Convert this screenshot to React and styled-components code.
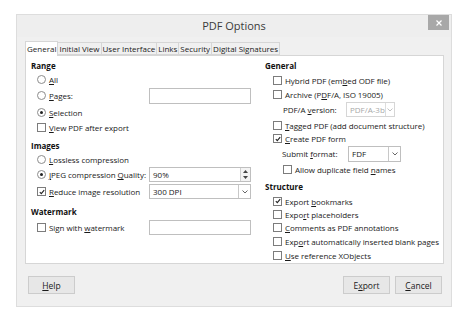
import React from 'react';
import styled, { createGlobalStyle } from 'styled-components';

const Global = createGlobalStyle`
  html, body { margin: 0; padding: 0; background: #ffffff; }
  body { font-family: "Open Sans", "Noto Sans", sans-serif; font-size: 8px; color: #1a1a1a; }
  #root { width: 474px; height: 325px; }
`;

const Page = styled.div`
  padding: 14px 0 0 16px;
`;

const Dialog = styled.div`
  width: 436px;
  height: 293px;
  box-sizing: border-box;
  background: #f0f0f0;
  border: 1px solid #dddddd;
  display: flex;
  flex-direction: column;
`;

const TitleBar = styled.div`
  height: 22px;
  display: grid;
  grid-template-columns: 1fr auto 1fr;
  align-items: start;
  background: #eeeeee;
`;

const Title = styled.div`
  grid-column: 2;
  font-size: 11px;
  line-height: 22px;
  color: #3a3a3a;
`;

const Close = styled.div`
  grid-column: 3;
  justify-self: end;
  margin-right: 2px;
  width: 21px;
  height: 15px;
  background: #a8a8a8;
  display: flex;
  align-items: center;
  justify-content: center;
`;

const Body = styled.div`
  padding: 4px 7px 0 8px;
  display: flex;
  flex-direction: column;
`;

const TabBar = styled.div`
  display: flex;
  align-items: flex-end;
  height: 14px;
  position: relative;
  z-index: 1;
`;

const Tab = styled.div`
  box-sizing: border-box;
  padding: 0 1px;
  height: ${p => (p.$active ? 15 : 13)}px;
  line-height: ${p => (p.$active ? 13 : 12)}px;
  margin-bottom: ${p => (p.$active ? -1 : 0)}px;
  border: 1px solid #d6d6d6;
  border-bottom: ${p => (p.$active ? 'none' : '1px solid #d6d6d6')};
  margin-right: -1px;
  background: ${p => (p.$active ? '#ffffff' : '#f0f0f0')};
  color: #1a1a1a;
  white-space: nowrap;
`;

const Panel = styled.div`
  height: 209px;
  box-sizing: border-box;
  border: 1px solid #d6d6d6;
  background: #ffffff;
  display: grid;
  grid-template-columns: 239px 1fr;
`;

const Column = styled.div`
  display: flex;
  flex-direction: column;
  padding-top: 3px;
  padding-right: ${p => p.$pr || 0}px;
`;

const Header = styled.div`
  font-weight: 700;
  height: 14px;
  line-height: 14px;
  padding-left: ${p => p.$indent || 0}px;
  margin-top: ${p => p.$mt || 0}px;
  color: #111;
`;

const Row = styled.div`
  display: flex;
  align-items: center;
  height: ${p => p.$h}px;
  padding-left: ${p => p.$indent}px;
  white-space: nowrap;
`;

const Label = styled.span`
  margin-left: ${p => (p.$noInd ? 0 : 3)}px;
  width: ${p => (p.$w ? `${p.$w}px` : 'auto')};
  flex: none;
  color: ${p => (p.$muted ? '#9a9a9a' : '#1a1a1a')};
  letter-spacing: -0.05px;
`;

const SideLabel = styled.span`
  margin-left: auto;
  margin-right: 3px;
`;

const RadioBox = styled.span`
  width: 7px;
  height: 7px;
  border: 1px solid #8c8c8c;
  border-radius: 50%;
  background: #fff;
  display: flex;
  align-items: center;
  justify-content: center;
  flex: none;
`;

const Dot = styled.span`
  width: 3px;
  height: 3px;
  border-radius: 50%;
  background: #222;
`;

const CheckBox = styled.span`
  width: 7px;
  height: 7px;
  border: 1px solid #7c7c7c;
  background: #fff;
  display: flex;
  align-items: center;
  justify-content: center;
  flex: none;
`;

const Field = styled.div`
  box-sizing: border-box;
  width: ${p => p.$w}px;
  height: ${p => p.$h}px;
  margin-left: ${p => (p.$auto ? 'auto' : '0')};
  border: 1px solid ${p => (p.$disabled ? '#d6d6d6' : '#bfbfbf')};
  background: #fff;
  display: flex;
  align-items: stretch;
  color: ${p => (p.$disabled ? '#a8a8a8' : '#1a1a1a')};
`;

const FieldText = styled.span`
  flex: 1;
  padding-left: 3px;
  display: flex;
  align-items: center;
`;

const ArrowBox = styled.span`
  width: 11px;
  border-left: 1px solid ${p => (p.$disabled ? '#dddddd' : '#c8c8c8')};
  display: flex;
  align-items: center;
  justify-content: center;
`;

const SpinBox = styled.span`
  width: 9px;
  border-left: 1px solid #d0d0d0;
  display: flex;
  flex-direction: column;
  align-items: center;
  justify-content: space-evenly;
  background: #f4f4f4;
`;

const ButtonRow = styled.div`
  display: flex;
  align-items: center;
  padding: 12px 9px 0 11px;
  gap: 5px;
`;

const Spacer = styled.div`
  flex: 1;
`;

const Button = styled.div`
  box-sizing: border-box;
  width: 47px;
  height: 18px;
  border: 1px solid #cccccc;
  background: #e7e7e7;
  display: flex;
  align-items: center;
  justify-content: center;
  font-size: 8.5px;
  color: #1a1a1a;
`;

const Radio = ({ checked }) => (
  <RadioBox>{checked && <Dot />}</RadioBox>
);

const Check = ({ checked }) => (
  <CheckBox>
    {checked && (
      <svg width="6" height="6" viewBox="0 0 6 6">
        <path d="M0.8 3.2 L2.3 4.7 L5.2 1.2" fill="none" stroke="#222" strokeWidth="1.1" />
      </svg>
    )}
  </CheckBox>
);

const Chevron = ({ color = '#555' }) => (
  <svg width="6" height="4" viewBox="0 0 6 4">
    <path d="M0.5 0.5 L3 3 L5.5 0.5" fill="none" stroke={color} strokeWidth="0.9" />
  </svg>
);

const Select = ({ w, h, value, disabled, auto }) => (
  <Field $w={w} $h={h} $disabled={disabled} $auto={auto}>
    <FieldText>{value}</FieldText>
    <ArrowBox $disabled={disabled}>
      <Chevron color={disabled ? '#bbb' : '#555'} />
    </ArrowBox>
  </Field>
);

export default function App() {
  return (
    <>
      <Global />
      <Page>
        <Dialog>
          <TitleBar>
            <Title>PDF Options</Title>
            <Close>
              <svg width="6" height="6" viewBox="0 0 6 6">
                <path d="M0.5 0.5 L5.5 5.5 M5.5 0.5 L0.5 5.5" stroke="#fff" strokeWidth="1.2" />
              </svg>
            </Close>
          </TitleBar>
          <Body>
            <TabBar>
              <Tab $active>General</Tab>
              <Tab>Initial View</Tab>
              <Tab>User Interface</Tab>
              <Tab>Links</Tab>
              <Tab>Security</Tab>
              <Tab>Digital Signatures</Tab>
            </TabBar>
            <Panel>
              <Column $pr={14}>
                <Header $indent={5}>Range</Header>
                <Row $h={13} $indent={11}>
                  <Radio />
                  <Label><u>A</u>ll</Label>
                </Row>
                <Row $h={19} $indent={11}>
                  <Radio />
                  <Label><u>P</u>ages:</Label>
                  <Field $w={102} $h={16} $auto />
                </Row>
                <Row $h={14} $indent={11}>
                  <Radio checked />
                  <Label><u>S</u>election</Label>
                </Row>
                <Row $h={16} $indent={11}>
                  <Check />
                  <Label><u>V</u>iew PDF after export</Label>
                </Row>
                <Header $indent={5} $mt={4}>Images</Header>
                <Row $h={13} $indent={11}>
                  <Radio />
                  <Label><u>L</u>ossless compression</Label>
                </Row>
                <Row $h={17} $indent={11}>
                  <Radio checked />
                  <Label><u>J</u>PEG compression</Label>
                  <SideLabel><u>Q</u>uality:</SideLabel>
                  <Field $w={102} $h={15}>
                    <FieldText>90%</FieldText>
                    <SpinBox>
                      <svg width="5" height="3" viewBox="0 0 5 3"><path d="M0 3 L2.5 0 L5 3Z" fill="#444" /></svg>
                      <svg width="5" height="3" viewBox="0 0 5 3"><path d="M0 0 L2.5 3 L5 0Z" fill="#444" /></svg>
                    </SpinBox>
                  </Field>
                </Row>
                <Row $h={17} $indent={11}>
                  <Check checked />
                  <Label><u>R</u>educe image resolution</Label>
                  <Select w={102} h={15} value="300 DPI" auto />
                </Row>
                <Header $indent={5} $mt={5}>Watermark</Header>
                <Row $h={17} $indent={11}>
                  <Check />
                  <Label>Sign with <u>w</u>atermark</Label>
                  <Field $w={102} $h={15} $auto />
                </Row>
              </Column>
              <Column>
                <Header>General</Header>
                <Row $h={14} $indent={8}>
                  <Check />
                  <Label>Hybrid PDF (em<u>b</u>ed ODF file)</Label>
                </Row>
                <Row $h={14} $indent={8}>
                  <Check />
                  <Label>Archive (P<u>D</u>F/A, ISO 19005)</Label>
                </Row>
                <Row $h={17} $indent={18}>
                  <Label $noInd $w={63}>PDF/A <u>v</u>ersion:</Label>
                  <Select w={49} h={15} value="PDF/A-3b" disabled />
                </Row>
                <Row $h={14} $indent={8}>
                  <Check />
                  <Label><u>T</u>agged PDF (add document structure)</Label>
                </Row>
                <Row $h={13} $indent={8}>
                  <Check checked />
                  <Label><u>C</u>reate PDF form</Label>
                </Row>
                <Row $h={17} $indent={17}>
                  <Label $noInd $w={66}>Submit <u>f</u>ormat:</Label>
                  <Select w={53} h={16} value="FDF" />
                </Row>
                <Row $h={15} $indent={18}>
                  <Check />
                  <Label>Allow duplicate field <u>n</u>ames</Label>
                </Row>
                <Header $mt={3}>Structure</Header>
                <Row $h={14} $indent={8}>
                  <Check checked />
                  <Label>Export <u>b</u>ookmarks</Label>
                </Row>
                <Row $h={13} $indent={8}>
                  <Check />
                  <Label>Expo<u>r</u>t placeholders</Label>
                </Row>
                <Row $h={13} $indent={8}>
                  <Check />
                  <Label><u>C</u>omments as PDF annotations</Label>
                </Row>
                <Row $h={14} $indent={8}>
                  <Check />
                  <Label>Exp<u>o</u>rt automatically inserted blank pages</Label>
                </Row>
                <Row $h={14} $indent={8}>
                  <Check />
                  <Label><u>U</u>se reference XObjects</Label>
                </Row>
              </Column>
            </Panel>
          </Body>
          <ButtonRow>
            <Button><span><u>H</u>elp</span></Button>
            <Spacer />
            <Button>E<u>x</u>port</Button>
            <Button><u>C</u>ancel</Button>
          </ButtonRow>
        </Dialog>
      </Page>
    </>
  );
}
